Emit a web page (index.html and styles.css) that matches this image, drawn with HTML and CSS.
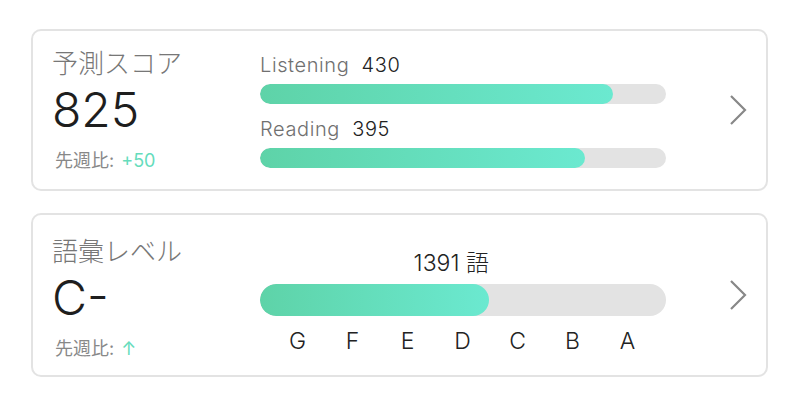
FILE: index.html
```html
<!DOCTYPE html>
<html lang="ja">
<head>
  <meta charset="UTF-8">
  <meta name="viewport" content="width=device-width, initial-scale=1.0">
  <title>スコア</title>
  <link rel="stylesheet" href="styles.css">
</head>
<body>

<div class="page">

  <div class="card">
    <div class="summary">
      <div class="summary-title">予測スコア</div>
      <div class="summary-value">825</div>
      <div class="summary-change">先週比: <span class="up">+50</span></div>
    </div>
    <div class="detail">
      <div class="part-label">Listening <span class="part-score">430</span></div>
      <div class="bar"><div class="bar-fill" style="width: 87%"></div></div>
      <div class="part-label">Reading <span class="part-score">395</span></div>
      <div class="bar"><div class="bar-fill" style="width: 80%"></div></div>
    </div>
    <svg class="chevron" width="18" height="32" viewBox="0 0 18 32">
      <path d="M2 2 L16 16 L2 30" fill="none" stroke="#888" stroke-width="2.2"/>
    </svg>
  </div>

  <div class="card card-vocab">
    <div class="summary">
      <div class="summary-title">語彙レベル</div>
      <div class="summary-value">C-</div>
      <div class="summary-change">先週比: <span class="up">↑</span></div>
    </div>
    <div class="detail">
      <div class="vocab-count-row">
        <div class="vocab-count" style="width: 56.4%">1391 語</div>
      </div>
      <div class="bar bar-thick"><div class="bar-fill" style="width: 56.4%"></div></div>
      <div class="levels">
        <span>G</span><span>F</span><span>E</span><span>D</span><span>C</span><span>B</span><span>A</span>
      </div>
    </div>
    <svg class="chevron" width="18" height="32" viewBox="0 0 18 32">
      <path d="M2 2 L16 16 L2 30" fill="none" stroke="#888" stroke-width="2.2"/>
    </svg>
  </div>

</div>

</body>
</html>
```

FILE: styles.css
```css
body {
  margin: 0;
  background-color: #fff;
  font-family: Inter, "Noto Sans CJK JP", sans-serif;
  color: #222;
}

.page {
  width: 737px;
  padding: 29px 0 0 31px;
  display: flex;
  flex-direction: column;
  gap: 22px;
}

.card {
  box-sizing: border-box;
  height: 162px;
  border: 2px solid #e3e3e3;
  border-radius: 10px;
  display: flex;
  align-items: center;
  padding: 0 19px;
}

.card-vocab {
  height: 164px;
}

.card-vocab .summary {
  padding-top: 7px;
}

.card-vocab .detail {
  padding-top: 14px;
}

.summary {
  width: 208px;
  flex-shrink: 0;
}

.summary-title {
  font-size: 26px;
  font-weight: 300;
  color: #777;
  line-height: 30px;
}

.summary-value {
  font-size: 48px;
  font-weight: 300;
  line-height: 62px;
  color: #1e1e1e;
}

.summary-change {
  font-size: 18px;
  line-height: 22px;
  color: #888;
  margin-top: 9px;
  padding-left: 3px;
}

.summary-change .up {
  color: #66dcbc;
  margin-left: 2px;
}

.detail {
  width: 406px;
  flex-shrink: 0;
}

.part-label {
  font-size: 20px;
  font-weight: 300;
  letter-spacing: 0.6px;
  color: #707070;
  line-height: 26px;
  margin-bottom: 6px;
}

.part-score {
  color: #222;
  margin-left: 6px;
}

.bar {
  height: 20px;
  border-radius: 10px;
  background-color: #e3e3e3;
  overflow: hidden;
  margin-bottom: 12px;
}

.bar:last-child {
  margin-bottom: 0;
}

.bar-fill {
  height: 100%;
  border-radius: 10px;
  background: linear-gradient(to right, #5ed3a8, #6be9d0);
}

.bar-thick {
  height: 32px;
  border-radius: 16px;
  margin-bottom: 12px;
}

.bar-thick .bar-fill {
  border-radius: 16px;
}

.vocab-count-row {
  margin-bottom: 8px;
}

.vocab-count {
  text-align: right;
  font-size: 23px;
  font-weight: 300;
  line-height: 26px;
  color: #222;
}

.levels {
  display: flex;
  padding-left: 10px;
}

.levels span {
  width: 55px;
  text-align: center;
  font-size: 23px;
  font-weight: 300;
  line-height: 26px;
  color: #222;
}

.chevron {
  margin-left: auto;
  margin-right: 0;
}
```
